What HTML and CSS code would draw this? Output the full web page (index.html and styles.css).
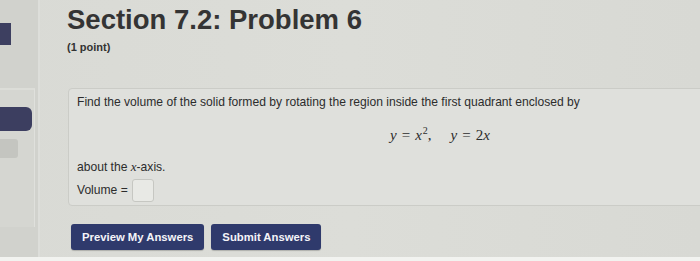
FILE: index.html
```html
<!DOCTYPE html>
<html>
<head>
<meta charset="utf-8">
<link rel="stylesheet" href="styles.css">
</head>
<body>
<div class="page">
  <aside class="sidebar">
    <div class="nav-tab"></div>
    <div class="side-panel">
      <div class="side-btn"></div>
      <div class="side-btn-grey"></div>
    </div>
  </aside>
  <main class="main">
    <h1 class="title">Section 7.2: Problem 6</h1>
    <div class="points">(1 point)</div>
    <div class="problem">
      <p class="line first">Find the volume of the solid formed by rotating the region inside the first quadrant enclosed by</p>
      <div class="math"><i>y</i><span class="op">=</span><i>x</i><sup>2</sup>,<span class="sp"></span><i>y</i><span class="op">=</span>2<i>x</i></div>
      <p class="line about">about the <i class="mi">x</i>-axis.</p>
      <p class="line volume">Volume =<span class="answer"></span></p>
    </div>
    <div class="actions">
      <button class="btn">Preview My Answers</button>
      <button class="btn">Submit Answers</button>
    </div>
  </main>
</div>
<div class="bottom-strip"></div>
</body>
</html>
```
FILE: styles.css
```css
html, body {
  margin: 0;
  padding: 0;
}
body {
  width: 700px;
  height: 261px;
  overflow: hidden;
  background: linear-gradient(90deg, #d9dad5 0%, #dcddd8 50%, #d8d9d4 100%);
  font-family: "Liberation Sans", Arial, sans-serif;
  color: #2f2f2f;
  position: relative;
}
.page {
  display: flex;
  height: 257px;
}
.sidebar {
  width: 38px;
  flex: none;
  background: #d1d2cd;
  border-right: 2px solid #dddeda;
  display: flex;
  flex-direction: column;
}
.nav-tab {
  width: 11px;
  height: 22px;
  margin-top: 23px;
  background: #3d3f60;
}
.side-panel {
  margin-top: 43px;
  border-top: 2px solid #dcddd8;
  padding-top: 17px;
  height: 120px;
  background: #d5d6d1;
  margin-right: 3px;
  border-right: 1px solid #dfe0dc;
}
.side-btn {
  width: 32px;
  height: 24px;
  background: #3c3e60;
  border-radius: 0 6px 6px 0;
}
.side-btn-grey {
  width: 18px;
  height: 19px;
  margin-top: 8px;
  background: #c4c5c0;
  border-radius: 0 3px 3px 0;
}
.main {
  flex: 1;
  padding-left: 28px;
}
.title {
  margin: 4px 0 0 -1px;
  font-size: 27.5px;
  line-height: 32px;
  font-weight: bold;
  color: #343434;
}
.points {
  margin-top: 4px;
  font-size: 11px;
  line-height: 14px;
  font-weight: bold;
  color: #333;
  margin-left: -1px;
}
.problem {
  margin-top: 34px;
  margin-right: -20px;
  height: 110px;
  background: #dfe0dc;
  border: 1px solid #cbccc7;
  border-radius: 4px 0 0 4px;
  padding: 6px 0 0 8px;
}
.line {
  margin: 0;
  font-size: 12.1px;
  line-height: 15px;
  color: #2c2c2c;
}
.math {
  margin: 17px 0 0 313px;
  font-family: "Liberation Serif", "Times New Roman", serif;
  font-size: 15px;
  line-height: 17px;
  color: #2c2c2c;
}
.math i {
  font-style: italic;
}
.math .op {
  margin: 0 5px;
}
.math sup {
  font-size: 10px;
  line-height: 0;
  vertical-align: 6px;
  margin-left: 1px;
}
.math .sp {
  display: inline-block;
  width: 19px;
}
.mi {
  font-family: "Liberation Serif", "Times New Roman", serif;
  font-size: 13px;
}
.about {
  margin-top: 15px;
}
.volume {
  margin-top: 4px;
  display: flex;
  align-items: center;
}
.answer {
  display: inline-block;
  width: 20px;
  height: 21px;
  margin-left: 4px;
  border: 1px solid #c6c7c2;
  border-radius: 3px;
  background: #e8e9e5;
}
.actions {
  display: flex;
  gap: 7px;
  margin: 18px 0 0 3px;
}
.btn {
  height: 26px;
  padding: 0 11px;
  border: none;
  border-radius: 3px;
  background: #2f3a6c;
  color: #f4f4f8;
  font-family: "Liberation Sans", Arial, sans-serif;
  font-weight: bold;
  font-size: 11.3px;
  box-shadow: 0 1px 1px rgba(0,0,0,0.2);
}
.bottom-strip {
  position: absolute;
  left: 0;
  right: 0;
  bottom: 0;
  height: 4px;
  background: #f2f3f0;
}
```
